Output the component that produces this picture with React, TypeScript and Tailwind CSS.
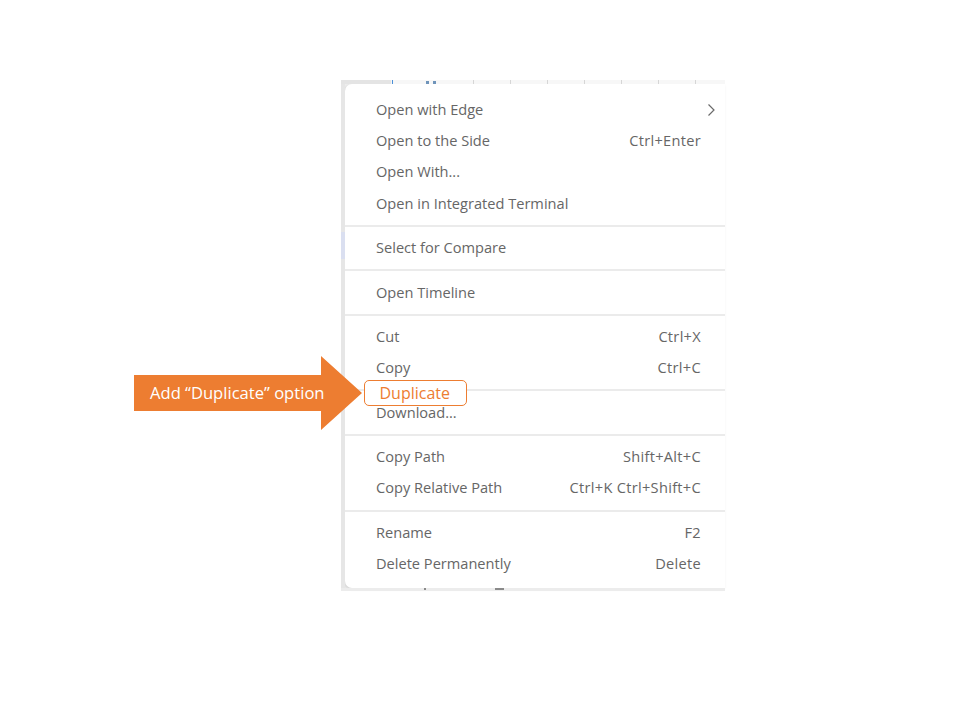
import React from 'react';

type Item = { label: string; keys?: string; submenu?: boolean } | 'sep';

const items: Item[] = [
  { label: 'Open with Edge', submenu: true },
  { label: 'Open to the Side', keys: 'Ctrl+Enter' },
  { label: 'Open With...' },
  { label: 'Open in Integrated Terminal' },
  'sep',
  { label: 'Select for Compare' },
  'sep',
  { label: 'Open Timeline' },
  'sep',
  { label: 'Cut', keys: 'Ctrl+X' },
  { label: 'Copy', keys: 'Ctrl+C' },
  'sep',
  { label: 'Download...' },
  'sep',
  { label: 'Copy Path', keys: 'Shift+Alt+C' },
  { label: 'Copy Relative Path', keys: 'Ctrl+K Ctrl+Shift+C' },
  'sep',
  { label: 'Rename', keys: 'F2' },
  { label: 'Delete Permanently', keys: 'Delete' },
];

const ticks = [392, 473, 510, 547, 584, 621, 658, 695];

function MenuRow({ item }: { item: Exclude<Item, 'sep'> }) {
  return (
    <div className="flex h-[31.2px] items-center justify-between pl-[31px] pr-[24px]">
      <span>{item.label}</span>
      {item.keys && <span className="tracking-[0.3px]">{item.keys}</span>}
      {item.submenu && (
        <svg width="9" height="14" viewBox="0 0 9 14" className="-mr-[15px]">
          <path d="M1.5 1.5 L7 7 L1.5 12.5" fill="none" stroke="#6a6a6a" strokeWidth="1.2" />
        </svg>
      )}
    </div>
  );
}

export default function App() {
  return (
    <div
      className="relative h-[720px] w-[960px] overflow-hidden bg-white"
      style={{ fontFamily: '"Open Sans", "Noto Sans", sans-serif' }}
    >
      {/* screenshot of the explorer context menu */}
      <div className="ml-[341px] mt-[80px] flex h-[511px] w-[384px] flex-col bg-[#eeeeee]">
        <div className="relative h-[4px] shrink-0 bg-[#f7f7f7]">
          <div className="absolute left-0 top-0 h-[4px] w-[50px] bg-[#e4e4e4]" />
          {ticks.map((x) => (
            <div
              key={x}
              className={`absolute top-0 h-[4px] w-px ${x === 392 ? 'bg-[#4a90d9]' : 'bg-[#d6d6d6]'}`}
              style={{ left: x - 341 }}
            />
          ))}
          <div className="absolute left-[85px] top-[1px] h-[3px] w-[3px] bg-[#6f94ba]" />
          <div className="absolute left-[92px] top-[1px] h-[3px] w-[3px] bg-[#6f94ba]" />
        </div>
        <div className="flex min-h-0 flex-1">
          <div className="relative w-[4px] shrink-0 bg-[#e6e6e6]">
            <div className="absolute left-0 top-[148px] h-[27px] w-[4px] bg-[#dadff0]" />
          </div>
          <div className="flex-1 rounded-l-[7px] bg-white pb-[8px] pt-[10.4px] text-[14.6px] text-[#666666] shadow-[-1px_1px_3px_rgba(0,0,0,0.12)]">
            {items.map((item, i) =>
              item === 'sep' ? (
                <div key={i} className="flex h-[13.3px] items-center">
                  <div className="h-[2px] w-full bg-[#ebebeb]" />
                </div>
              ) : (
                <MenuRow key={i} item={item} />
              )
            )}
          </div>
        </div>
        <div className="relative h-[3px] shrink-0 bg-[#ececec]">
          <div className="absolute left-[83px] top-0 h-[2px] w-[2px] bg-[#8a8a8a]" />
          <div className="absolute left-[154px] top-0 h-[2px] w-[9px] bg-[#8a8a8a]" />
        </div>
      </div>

      {/* callout arrow */}
      <div className="absolute left-[134px] top-[356px] h-[74px] w-[228px]">
        <svg width="228" height="74" viewBox="0 0 228 74" className="absolute inset-0">
          <polygon points="0,19 187,19 187,0 228,37 187,74 187,55 0,55" fill="#ED7D31" />
        </svg>
        <div className="absolute left-[16px] top-[19px] flex h-[36px] items-center text-[16.6px] text-white">
          Add “Duplicate” option
        </div>
      </div>

      {/* highlighted new item */}
      <div className="absolute left-[364px] top-[380px] flex h-[26px] w-[103px] items-center rounded-[5px] border-[1.5px] border-[#ED7D31] bg-white pl-[14.5px] text-[16px] text-[#ED7D31]">
        Duplicate
      </div>
    </div>
  );
}
